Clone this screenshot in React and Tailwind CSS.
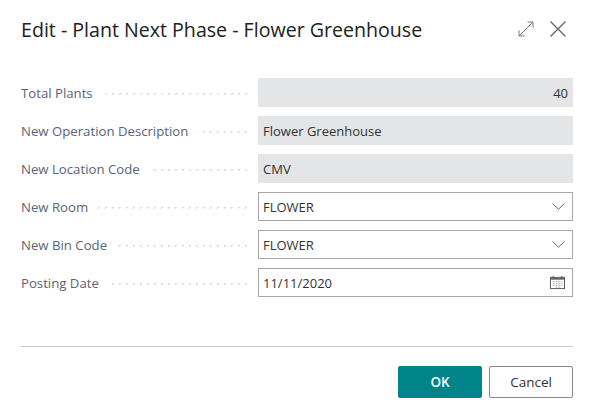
const fields = [
  { label: "Total Plants", value: "40", kind: "readonly", right: true },
  { label: "New Operation Description", value: "Flower Greenhouse", kind: "readonly" },
  { label: "New Location Code", value: "CMV", kind: "readonly" },
  { label: "New Room", value: "FLOWER", kind: "select" },
  { label: "New Bin Code", value: "FLOWER", kind: "select" },
  { label: "Posting Date", value: "11/11/2020", kind: "date" },
];

function CalendarIcon() {
  return (
    <svg width="15" height="15" viewBox="0 0 16 16" fill="none">
      <rect x="0.5" y="2.5" width="15" height="12" fill="#fff" stroke="#555" />
      <rect x="1" y="3" width="14" height="2" fill="#666" />
      <path d="M3.5 1v3M12.5 1v3" stroke="#555" />
      <path
        d="M3 7h2M6 7h2M9 7h2M12 7h1M3 9h2M6 9h2M9 9h2M12 9h1M3 11h2M6 11h2M9 11h2M12 11h1M6 13h2M9 13h2"
        stroke="#aaa"
      />
    </svg>
  );
}

function ChevronIcon() {
  return (
    <svg width="13" height="7" viewBox="0 0 13 7" fill="none" stroke="#666" strokeWidth="1">
      <path d="M0.5 0.5 6.5 6.2 12.5 0.5" />
    </svg>
  );
}

function Field({ field }) {
  if (field.kind === "readonly") {
    return (
      <div
        className={`flex h-[29px] w-[315px] items-center bg-[#e4e5e7] px-[5px] pt-[2px] text-[13px] text-[#333] ${
          field.right ? "justify-end" : ""
        }`}
      >
        {field.value}
      </div>
    );
  }
  return (
    <div className="flex h-[29px] w-[315px] items-center justify-between border border-[#a6a6a6] bg-white pr-[7px] pl-[4px] text-[13px] text-[#333]">
      <span className="pt-[2px]">{field.value}</span>
      {field.kind === "select" ? <ChevronIcon /> : <CalendarIcon />}
    </div>
  );
}

export default function App() {
  return (
    <div className="flex h-[419px] w-[595px] flex-col bg-white pr-[22px] pl-[21px] font-['Open_Sans','Noto_Sans',sans-serif]">
      <div className="flex h-[78px] shrink-0 items-start justify-between pt-[16px]">
        <h1 className="text-[19.6px] leading-[28px] font-normal text-[#212121]">
          Edit - Plant Next Phase - Flower Greenhouse
        </h1>
        <div className="flex items-center gap-[15px] pt-[4px] pr-[6px]">
          <svg width="16" height="16" viewBox="0 0 16 16" fill="none" stroke="#777" strokeWidth="1">
            <path d="M1 15 15 1M9.5 1H15v5.5M1 9.5V15h5.5" />
          </svg>
          <svg width="18" height="18" viewBox="0 0 18 18" fill="none" stroke="#666" strokeWidth="1.4">
            <path d="M1.5 1.5l15 15M16.5 1.5l-15 15" />
          </svg>
        </div>
      </div>

      <div className="flex flex-col gap-[9px]">
        {fields.map((field) => (
          <div key={field.label} className="flex items-center justify-between">
            <div className="flex w-[228px] items-center gap-[9px] pt-[2px]">
              <span className="text-[13.2px] whitespace-nowrap text-[#5a6473]">{field.label}</span>
              <span className="mt-[1px] h-[3px] flex-1 bg-[radial-gradient(circle,#d2d4d8_1px,transparent_1px)] bg-[length:7px_3px] bg-right" />
            </div>
            <Field field={field} />
          </div>
        ))}
      </div>

      <div className="mt-[49px] border-t border-[#c8c8c8]" />

      <div className="mt-[19px] flex justify-end gap-[7px]">
        <button
          type="button"
          className="h-[32px] w-[84px] rounded-[2px] bg-[#008489] text-[13.5px] font-semibold text-white"
        >
          OK
        </button>
        <button
          type="button"
          className="h-[32px] w-[84px] rounded-[2px] border border-[#8a8a8a] bg-white text-[13.5px] text-[#333]"
        >
          Cancel
        </button>
      </div>
    </div>
  );
}
